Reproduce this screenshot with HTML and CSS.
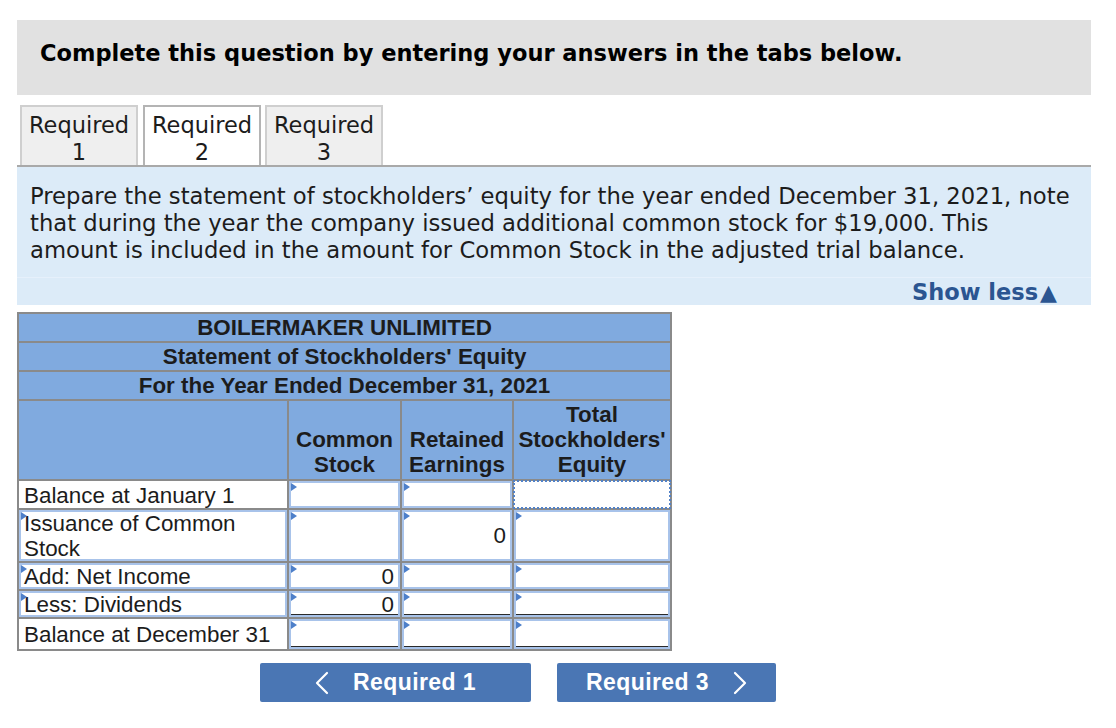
FILE: index.html
```html
<!DOCTYPE html>
<html lang="en">
<head>
<meta charset="utf-8">
<title>Statement of Stockholders' Equity</title>
<link rel="stylesheet" href="styles.css">
</head>
<body>
<div class="page">
  <div class="banner">Complete this question by entering your answers in the tabs below.</div>

  <div class="tabs">
    <div class="tab">Required<br>1</div>
    <div class="tab active">Required<br>2</div>
    <div class="tab">Required<br>3</div>
  </div>

  <div class="panel">
    <p class="instructions">Prepare the statement of stockholders’ equity for the year ended December 31, 2021, note that during the year the company issued additional common stock for $19,000. This amount is included in the amount for Common Stock in the adjusted trial balance.</p>
    <div class="showless">Show less<span class="tri">▲</span></div>
  </div>

  <table class="stmt">
    <colgroup>
      <col class="c1"><col class="c2"><col class="c3"><col class="c4">
    </colgroup>
    <tr class="title"><th colspan="4">BOILERMAKER UNLIMITED</th></tr>
    <tr class="title"><th colspan="4">Statement of Stockholders' Equity</th></tr>
    <tr class="title"><th colspan="4">For the Year Ended December 31, 2021</th></tr>
    <tr class="colhead">
      <th></th>
      <th>Common<br>Stock</th>
      <th>Retained<br>Earnings</th>
      <th>Total<br>Stockholders'<br>Equity</th>
    </tr>
    <tr class="r1">
      <td class="lbl">Balance at January 1</td>
      <td class="in"></td>
      <td class="in"></td>
      <td class="in focus"></td>
    </tr>
    <tr class="r2">
      <td class="lbl in">Issuance of Common Stock</td>
      <td class="in"></td>
      <td class="in num">0</td>
      <td class="in"></td>
    </tr>
    <tr class="r3">
      <td class="lbl in">Add: Net Income</td>
      <td class="in num">0</td>
      <td class="in"></td>
      <td class="in"></td>
    </tr>
    <tr class="r4">
      <td class="lbl in">Less: Dividends</td>
      <td class="in num under">0</td>
      <td class="in under"></td>
      <td class="in under"></td>
    </tr>
    <tr class="r5">
      <td class="lbl">Balance at December 31</td>
      <td class="in under"></td>
      <td class="in under"></td>
      <td class="in under"></td>
    </tr>
  </table>

  <div class="nav">
    <button class="navbtn prev" type="button">
      <svg width="14" height="24" viewBox="0 0 14 24" aria-hidden="true"><polyline points="12,2 2,12 12,22" fill="none" stroke="#fff" stroke-width="2.2" stroke-linecap="round" stroke-linejoin="round"/></svg>
      <span>Required 1</span>
    </button>
    <button class="navbtn next" type="button">
      <span>Required 3</span>
      <svg width="14" height="24" viewBox="0 0 14 24" aria-hidden="true"><polyline points="2,2 12,12 2,22" fill="none" stroke="#fff" stroke-width="2.2" stroke-linecap="round" stroke-linejoin="round"/></svg>
    </button>
  </div>
</div>
</body>
</html>
```

FILE: styles.css
```css
html, body {
  margin: 0;
  padding: 0;
  background: #ffffff;
}

.page {
  padding: 20px 0 0 17px;
  width: 1074px;
  color: #1c1c1c;
}

.banner {
  background: #e1e1e1;
  height: 75px;
  box-sizing: border-box;
  padding: 20px 0 0 23px;
  font-family: "DejaVu Sans", Verdana, sans-serif;
  font-weight: bold;
  font-size: 22.5px;
  line-height: 27px;
  color: #000;
}

.tabs {
  display: flex;
  margin-top: 10px;
  padding-left: 3px;
  gap: 5px;
}

.tab {
  width: 118px;
  height: 60px;
  box-sizing: border-box;
  border: 2px solid #cfcfcf;
  border-bottom: none;
  background: #efefef;
  text-align: center;
  padding-top: 5px;
  font-family: "DejaVu Sans", Verdana, sans-serif;
  font-size: 22.5px;
  line-height: 27px;
  color: #1c1c1c;
}

.tab + .tab + .tab {
  margin-left: -1px;
}

.tab.active {
  background: #ffffff;
  border-color: #b4b4b4;
}

.panel {
  border-top: 2px solid #a9a9a9;
  background: #dcebf8;
  font-family: "DejaVu Sans", Verdana, sans-serif;
  font-size: 22.7px;
  line-height: 27px;
}

.instructions {
  margin: 0;
  padding: 16px 15px 13px 13px;
  color: #1c1c1c;
}

.showless {
  border-top: 1px solid #e6f0fb;
  text-align: right;
  padding-right: 34px;
  font-weight: bold;
  font-size: 22.5px;
  color: #2b5591;
  height: 28px;
  box-sizing: border-box;
  padding-top: 1px;
}

.tri {
  font-size: 22px;
  margin-left: 2px;
}

.stmt {
  margin-top: 7px;
  border-collapse: collapse;
  width: 653px;
  table-layout: fixed;
  font-family: "Liberation Sans", Arial, sans-serif;
  font-size: 22.4px;
  line-height: 25px;
  color: #1c1c1c;
  border: 2px solid #8a8a8a;
}

.c1 { width: 270px; }
.c2 { width: 113px; }
.c3 { width: 112px; }
.c4 { width: 158px; }

.stmt th,
.stmt td {
  border: 2px solid #8a8a8a;
  padding: 0;
}

.stmt th {
  background: #80aadf;
  font-weight: bold;
  text-align: center;
}

.title th {
  padding: 1px 0;
}

.colhead th {
  vertical-align: bottom;
  padding: 1px 0 2px;
}

.stmt td {
  background: #ffffff;
  position: relative;
}

.lbl {
  padding: 1px 4px 0 5px !important;
  text-align: left;
}

.in {
  box-shadow: inset 0 0 0 2px #a8c3ea;
}

.in::before {
  content: "";
  position: absolute;
  left: 2px;
  top: 2px;
  border-left: 6px solid #4d7fc9;
  border-top: 4px solid transparent;
  border-bottom: 4px solid transparent;
}

.r1 .lbl::before,
.r5 .lbl::before {
  display: none;
}

.r1 td { height: 26px; }
.r2 td { height: 50px; }
.r3 td { height: 25px; }
.r4 td { height: 25px; }
.r5 td { height: 29px; }

.num {
  text-align: right;
  padding-right: 6px !important;
  vertical-align: middle;
}

.under {
  box-shadow: inset 0 0 0 2px #a8c3ea, inset 0 -3px 0 #2a2a2a;
}

.in.focus {
  box-shadow: none;
  outline: 2px dotted #5282c8;
  outline-offset: -2px;
}

.in.focus::before {
  display: none;
}

.nav {
  display: flex;
  gap: 26px;
  margin: 12px 0 0 243px;
}

.navbtn {
  height: 39px;
  border: none;
  border-radius: 2px;
  background: #4a76b4;
  color: #ffffff;
  font-family: "Liberation Sans", Arial, sans-serif;
  font-weight: bold;
  font-size: 23px;
  letter-spacing: 0.4px;
  display: flex;
  align-items: center;
  justify-content: center;
  gap: 24px;
  padding: 0;
  cursor: pointer;
}

.navbtn.prev { width: 271px; }
.navbtn.next { width: 219px; }
```
